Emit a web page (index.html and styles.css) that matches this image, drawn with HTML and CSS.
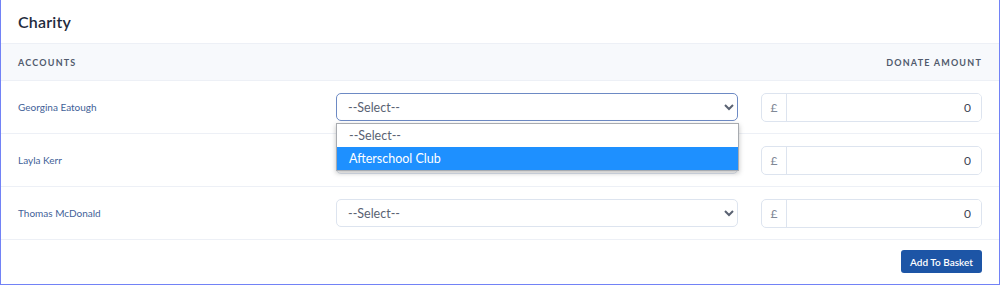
FILE: index.html
```html
<!DOCTYPE html>
<html lang="en">
<head>
<meta charset="utf-8">
<title>Charity</title>
<link rel="stylesheet" href="styles.css">
</head>
<body>
<div class="card">
  <div class="card-head">
    <h2 class="title">Charity</h2>
  </div>
  <div class="row thead">
    <div class="th">Accounts</div>
    <div></div>
    <div class="th th-right">Donate Amount</div>
  </div>
  <div class="row">
    <div class="name">Georgina Eatough</div>
    <div class="sel-cell">
      <select class="sel focused"><option>--Select--</option><option>Afterschool Club</option></select>
      <div class="listbox">
        <div class="opt">--Select--</div>
        <div class="opt active">Afterschool Club</div>
      </div>
    </div>
    <div class="group"><span class="prefix">£</span><input class="amount" value="0"></div>
  </div>
  <div class="row">
    <div class="name">Layla Kerr</div>
    <div class="sel-cell">
      <select class="sel"><option>--Select--</option><option>Afterschool Club</option></select>
    </div>
    <div class="group"><span class="prefix">£</span><input class="amount" value="0"></div>
  </div>
  <div class="row">
    <div class="name">Thomas McDonald</div>
    <div class="sel-cell">
      <select class="sel"><option>--Select--</option><option>Afterschool Club</option></select>
    </div>
    <div class="group"><span class="prefix">£</span><input class="amount" value="0"></div>
  </div>
  <div class="foot">
    <button class="btn">Add To Basket</button>
  </div>
</div>
</body>
</html>
```

FILE: styles.css
```css
* { box-sizing: border-box; }
html, body { margin: 0; padding: 0; background: #fff; }
body { font-family: "Lato", "Noto Sans", sans-serif; color: #1f2a3c; }

.card {
  width: 1000px;
  height: 285px;
  border: 1px solid #7282f6;
  border-top: none;
  overflow: hidden;
}

.card-head {
  height: 44px;
  display: flex;
  align-items: center;
  padding: 0 17px;
  border-bottom: 1px solid #edf0f6;
}
.title {
  margin: 0;
  font-size: 16px;
  font-weight: 600;
  letter-spacing: 0.2px;
  color: #1f2b3d;
}

.row {
  display: grid;
  grid-template-columns: 318px 402px 1fr;
  align-items: center;
  padding: 0 17px;
  height: 53px;
  border-bottom: 1px solid #edf0f6;
}
.row.thead {
  height: 37px;
  background: #f7f9fc;
}
.th {
  font-size: 9px;
  font-weight: 700;
  letter-spacing: 1.2px;
  text-transform: uppercase;
  color: #515b6d;
}
.th-right { text-align: right; }

.name {
  font-size: 10px;
  color: #3f5f98;
}

.sel-cell { position: relative; }
.sel {
  width: 100%;
  height: 28px;
  border: 1px solid #dde4ef;
  border-radius: 5px;
  background: #fff;
  font-family: "Lato", "Noto Sans", sans-serif;
  font-size: 12.5px;
  color: #5a6272;
  padding: 0 7px;
  outline: none;
}
.sel.focused { border-color: #6d8ac4; }

.listbox {
  position: absolute;
  left: 0;
  top: 30px;
  width: 403px;
  background: #fff;
  border: 1px solid #a8abb0;
  box-shadow: 0 2px 5px rgba(0, 0, 0, 0.25);
  z-index: 5;
}
.opt {
  height: 23px;
  line-height: 23px;
  padding: 0 12px;
  font-size: 12.5px;
  color: #5a6272;
}
.opt.active {
  background: #1e90ff;
  color: #fff;
}

.group {
  justify-self: end;
  width: 221px;
  display: flex;
  height: 29px;
  border: 1px solid #dde4ef;
  border-radius: 5px;
  overflow: hidden;
}
.prefix {
  width: 25px;
  display: flex;
  align-items: center;
  justify-content: center;
  border-right: 1px solid #dde4ef;
  font-size: 12px;
  color: #808896;
}
.amount {
  flex: 1;
  min-width: 0;
  border: none;
  outline: none;
  text-align: right;
  padding: 0 10px;
  font-family: "Lato", "Noto Sans", sans-serif;
  font-size: 12px;
  color: #3d4555;
}

.foot {
  display: flex;
  justify-content: flex-end;
  padding: 10px 17px 0;
}
.btn {
  height: 23px;
  padding: 0 9px;
  border: none;
  border-radius: 3px;
  background: #1d55a6;
  color: #fff;
  font-family: "Lato", "Noto Sans", sans-serif;
  font-size: 10px;
  font-weight: 600;
}
```
